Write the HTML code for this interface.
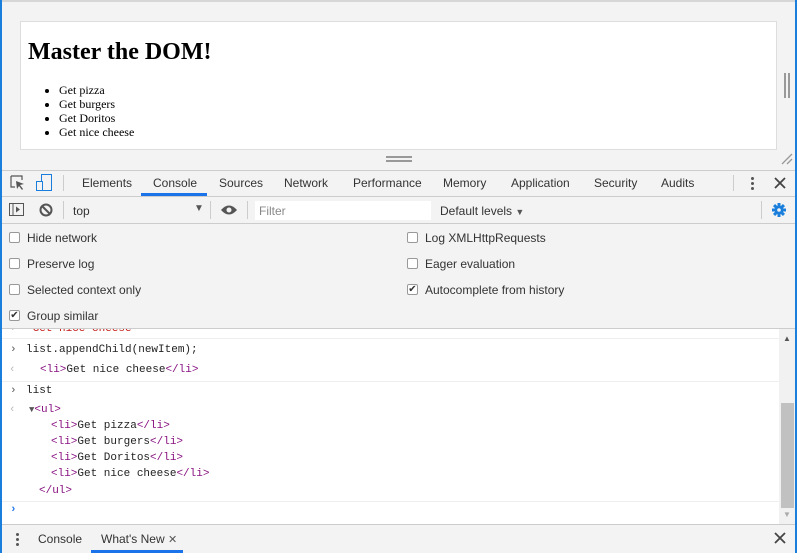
<!DOCTYPE html>
<html><head><style>
*{margin:0;padding:0;box-sizing:border-box}
body{width:797px;height:553px;overflow:hidden;position:relative;background:#fff;font-family:"Liberation Sans",sans-serif;font-size:12px;color:#333}
.a{position:absolute}
.mono{font-family:"Liberation Mono",monospace;font-size:11px;color:#222;white-space:pre}
.tag{color:#881280}
.cb{position:absolute;width:11px;height:11px;border:1px solid #999;border-radius:2px;background:#fff}
.lbl{position:absolute;font-size:12px;color:#333}
.tab{position:absolute;top:176px;font-size:12px;color:#333}
</style></head><body>
<div class="a" style="left:0;top:0;width:797px;height:170px;background:#f3f3f3;border-top:2px solid #d6d6d6"></div>
<div class="a" style="left:0;top:0;width:2px;height:553px;background:#1a7fdc"></div>
<div class="a" style="right:0;top:0;width:2px;height:553px;background:#1a7fdc"></div>
<div class="a" style="left:20px;top:21px;width:757px;height:129px;background:#fff;border:1px solid #ddd">
 <div class="a" style="left:7px;top:17px;font-family:'Liberation Serif',serif;font-size:24px;font-weight:bold;color:#000">Master the DOM!</div>
 <ul class="a" style="left:38px;top:61px;font-family:'Liberation Serif',serif;font-size:12px;line-height:14px;color:#000">
  <li>Get pizza</li><li>Get burgers</li><li>Get Doritos</li><li>Get nice cheese</li></ul>
</div>
<div class="a" style="left:784px;top:73px;width:2px;height:25px;background:#999"></div>
<div class="a" style="left:788px;top:73px;width:2px;height:25px;background:#999"></div>
<div class="a" style="left:386px;top:156px;width:26px;height:2px;background:#999"></div>
<div class="a" style="left:386px;top:160px;width:26px;height:2px;background:#999"></div>
<svg class="a" style="left:780px;top:152px" width="14" height="14"><path d="M2 12L12 2M7 12L12 7" stroke="#999" stroke-width="1.3"/></svg>
<div class="a" style="left:2px;top:170px;width:793px;height:27px;background:#f3f3f3;border-top:1px solid #ccc;border-bottom:1px solid #ccc"></div>
<svg class="a" style="left:10px;top:175px" width="16" height="16"><path d="M1 1H12V5M1 1V12H5" stroke="#555" fill="none" stroke-width="1.2"/><path d="M6 6L14 9L10 10L13 14L12 15L9 11L7 14Z" fill="#555"/></svg>
<svg class="a" style="left:36px;top:174px" width="18" height="18"><rect x="5.5" y="0.5" width="10" height="16" fill="none" stroke="#1a7fdc"/><rect x="0.5" y="7.5" width="6" height="9" fill="#f3f3f3" stroke="#1a7fdc"/></svg>
<div class="a" style="left:63px;top:175px;width:1px;height:16px;background:#ccc"></div>
<div class="tab" style="left:82px">Elements</div>
<div class="tab" style="left:153px;color:#333">Console</div>
<div class="a" style="left:141px;top:193px;width:66px;height:3px;background:#1a73e8"></div>
<div class="tab" style="left:219px">Sources</div>
<div class="tab" style="left:284px">Network</div>
<div class="tab" style="left:353px">Performance</div>
<div class="tab" style="left:443px">Memory</div>
<div class="tab" style="left:511px">Application</div>
<div class="tab" style="left:594px">Security</div>
<div class="tab" style="left:661px">Audits</div>
<div class="a" style="left:733px;top:175px;width:1px;height:16px;background:#ccc"></div>
<div class="a" style="left:751px;top:177px;width:3px;height:3px;background:#555;border-radius:2px;box-shadow:0 5px 0 #555,0 10px 0 #555"></div>
<svg class="a" style="left:774px;top:177px" width="12" height="12"><path d="M1 1L11 11M11 1L1 11" stroke="#444" stroke-width="1.8"/></svg>
<div class="a" style="left:2px;top:197px;width:793px;height:27px;background:#f3f3f3;border-bottom:1px solid #ccc"></div>
<svg class="a" style="left:9px;top:203px" width="16" height="14"><rect x="0.5" y="0.5" width="14" height="12" fill="none" stroke="#555"/><path d="M4 1V13" stroke="#555"/><path d="M7 3.5L11 6.5L7 9.5Z" fill="#555"/></svg>
<svg class="a" style="left:39px;top:203px" width="14" height="14"><circle cx="7" cy="7" r="5.5" fill="none" stroke="#555" stroke-width="2"/><path d="M3 3L11 11" stroke="#555" stroke-width="2"/></svg>
<div class="a" style="left:63px;top:201px;width:1px;height:18px;background:#ccc"></div>
<div class="a" style="left:73px;top:204px;font-size:12px">top</div>
<div class="a" style="left:194px;top:203px;font-size:10px;color:#555">▼</div>
<div class="a" style="left:210px;top:201px;width:1px;height:18px;background:#ccc"></div>
<svg class="a" style="left:220px;top:204px" width="18" height="12"><path d="M1 6Q9 -3 17 6Q9 15 1 6Z" fill="#555"/><circle cx="9" cy="6" r="2.5" fill="#f3f3f3"/></svg>
<div class="a" style="left:247px;top:201px;width:1px;height:18px;background:#ccc"></div>
<div class="a" style="left:255px;top:201px;width:176px;height:19px;background:#fff;padding:3px 4px;color:#888">Filter</div>
<div class="a" style="left:440px;top:204px">Default levels <span style="font-size:9px;color:#555">▼</span></div>
<div class="a" style="left:761px;top:201px;width:1px;height:18px;background:#ccc"></div>
<svg class="a" style="left:772px;top:203px" width="14" height="14"><g fill="#1a7fdc"><circle cx="7" cy="7" r="4.5"/><rect x="5.5" y="0" width="3" height="14"/><rect x="0" y="5.5" width="14" height="3"/><rect x="5.5" y="0" width="3" height="14" transform="rotate(45 7 7)"/><rect x="5.5" y="0" width="3" height="14" transform="rotate(-45 7 7)"/></g><circle cx="7" cy="7" r="1.8" fill="#f3f3f3"/></svg>
<div class="a" style="left:2px;top:224px;width:793px;height:105px;background:#f3f3f3;border-bottom:1px solid #ccc"></div>
<div class="cb" style="left:9px;top:232px"></div><div class="lbl" style="left:27px;top:231px">Hide network</div>
<div class="cb" style="left:9px;top:258px"></div><div class="lbl" style="left:27px;top:257px">Preserve log</div>
<div class="cb" style="left:9px;top:284px"></div><div class="lbl" style="left:27px;top:283px">Selected context only</div>
<div class="cb" style="left:9px;top:310px;font-size:10px;line-height:9px;text-align:center;color:#333">✔</div><div class="lbl" style="left:27px;top:309px">Group similar</div>
<div class="cb" style="left:407px;top:232px"></div><div class="lbl" style="left:425px;top:231px">Log XMLHttpRequests</div>
<div class="cb" style="left:407px;top:258px"></div><div class="lbl" style="left:425px;top:257px">Eager evaluation</div>
<div class="cb" style="left:407px;top:284px;font-size:10px;line-height:9px;text-align:center;color:#333">✔</div><div class="lbl" style="left:425px;top:283px">Autocomplete from history</div>
<div class="a" style="left:2px;top:329px;width:777px;height:195px;overflow:hidden">
 <div class="a mono" style="left:7px;top:-6px;color:#bbb">‹</div>
 <div class="a mono" style="left:24px;top:-6px;color:#c41a16">"Get nice cheese"</div>
 <div class="a" style="left:0;top:9px;width:777px;height:1px;background:#eee"></div>
 <div class="a mono" style="left:8px;top:15px;color:#555">›</div>
 <div class="a mono" style="left:24px;top:15px">list.appendChild(newItem);</div>
 <div class="a mono" style="left:7px;top:35px;color:#bbb">‹</div>
 <div class="a mono" style="left:38px;top:35px"><span class="tag">&lt;li&gt;</span>Get nice cheese<span class="tag">&lt;/li&gt;</span></div>
 <div class="a" style="left:0;top:52px;width:777px;height:1px;background:#eee"></div>
 <div class="a mono" style="left:8px;top:56px;color:#555">›</div>
 <div class="a mono" style="left:24px;top:56px">list</div>
 <div class="a mono" style="left:7px;top:75px;color:#bbb">‹</div>
 <div class="a mono" style="left:27px;top:75px"><span style="color:#555;font-size:9px">▼</span><span class="tag">&lt;ul&gt;</span></div>
 <div class="a mono" style="left:49px;top:91px"><span class="tag">&lt;li&gt;</span>Get pizza<span class="tag">&lt;/li&gt;</span></div>
 <div class="a mono" style="left:49px;top:107px"><span class="tag">&lt;li&gt;</span>Get burgers<span class="tag">&lt;/li&gt;</span></div>
 <div class="a mono" style="left:49px;top:123px"><span class="tag">&lt;li&gt;</span>Get Doritos<span class="tag">&lt;/li&gt;</span></div>
 <div class="a mono" style="left:49px;top:139px"><span class="tag">&lt;li&gt;</span>Get nice cheese<span class="tag">&lt;/li&gt;</span></div>
 <div class="a mono" style="left:37px;top:156px"><span class="tag">&lt;/ul&gt;</span></div>
 <div class="a" style="left:0;top:172px;width:777px;height:1px;background:#eee"></div>
 <div class="a mono" style="left:8px;top:175px;color:#1a73e8;font-weight:bold">›</div>
</div>
<div class="a" style="left:779px;top:329px;width:16px;height:195px;background:#f1f1f1"></div>
<div class="a" style="left:783px;top:334px;font-size:8px;color:#555">▲</div>
<div class="a" style="left:781px;top:403px;width:13px;height:105px;background:#c1c1c1"></div>
<div class="a" style="left:783px;top:510px;font-size:8px;color:#aaa">▼</div>
<div class="a" style="left:2px;top:524px;width:793px;height:29px;background:#f3f3f3;border-top:1px solid #ccc"></div>
<div class="a" style="left:16px;top:533px;width:3px;height:3px;background:#555;border-radius:2px;box-shadow:0 5px 0 #555,0 10px 0 #555"></div>
<div class="a" style="left:38px;top:532px">Console</div>
<div class="a" style="left:101px;top:532px">What's New <span style="font-size:11px;color:#555">✕</span></div>
<div class="a" style="left:91px;top:550px;width:92px;height:3px;background:#1a73e8"></div>
<svg class="a" style="left:774px;top:532px" width="12" height="12"><path d="M1 1L11 11M11 1L1 11" stroke="#444" stroke-width="1.8"/></svg>
</body></html>
